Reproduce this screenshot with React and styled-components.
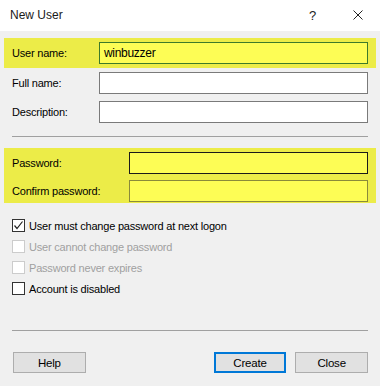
import React from "react";
import styled, { createGlobalStyle } from "styled-components";

const GlobalStyle = createGlobalStyle`
  html, body {
    margin: 0;
    padding: 0;
    background: #f0f0f0;
  }
  * {
    box-sizing: border-box;
  }
`;

const Window = styled.div`
  width: 380px;
  height: 386px;
  background: #f0f0f0;
  font-family: "Liberation Sans", Arial, sans-serif;
  font-size: 11px;
  letter-spacing: -0.2px;
  color: #000;
  display: flex;
  flex-direction: column;
  overflow: hidden;
`;

const TitleBar = styled.div`
  height: 31px;
  background: #fff;
  display: flex;
  align-items: center;
  padding: 0 0 1px 10px;
  letter-spacing: 0;
`;

const Title = styled.div`
  flex: 1;
  font-size: 12px;
  color: #1a1a1a;
`;

const TitleButton = styled.div`
  width: 45px;
  height: 30px;
  display: flex;
  align-items: center;
  justify-content: center;
  font-size: 13px;
  color: #222;
`;

const Body = styled.div`
  padding: 7px 12px 0 12px;
  display: flex;
  flex-direction: column;
`;

const Band = styled.div`
  margin: 0 -8px;
  padding: ${(p) => p.$pad || "4px 8px"};
  background: #ecec48;
  display: flex;
  flex-direction: column;
  gap: ${(p) => p.$gap || 0}px;
`;

const Row = styled.div`
  height: ${(p) => p.$h || 22}px;
  display: flex;
  align-items: center;
`;

const Label = styled.div`
  width: ${(p) => p.$w}px;
  flex: none;
`;

const Field = styled.div`
  flex: 1;
  height: 22px;
  border: 1px solid ${(p) => p.$border || "#7a7a7a"};
  background: ${(p) => (p.$hl ? "#fdfd55" : "#fff")};
  padding: 0 4px;
  display: flex;
  align-items: center;
  font-size: 12px;
  letter-spacing: -0.3px;
`;

const Separator = styled.div`
  height: 1px;
  background: #a0a0a0;
  margin: ${(p) => p.$m};
`;

const Checks = styled.div`
  margin-top: 12px;
  display: flex;
  flex-direction: column;
`;

const CheckRow = styled.div`
  height: 21px;
  display: flex;
  align-items: center;
  gap: 4px;
  font-size: 11px;
  color: ${(p) => (p.$disabled ? "#a0a0a0" : "#000")};
`;

const Box = styled.div`
  width: 13px;
  height: 13px;
  border: 1px solid ${(p) => (p.$disabled ? "#cccccc" : "#333")};
  background: #fff;
  display: flex;
  align-items: center;
  justify-content: center;
`;

const Buttons = styled.div`
  display: flex;
  align-items: center;
  padding: 0 0 0 1px;
`;

const Button = styled.div`
  width: ${(p) => p.$w || 73}px;
  height: 21px;
  border: ${(p) => (p.$primary ? "2px solid #0078d7" : "1px solid #adadad")};
  background: #e1e1e1;
  display: flex;
  align-items: center;
  justify-content: center;
  font-size: 11.5px;
  margin-left: ${(p) => p.$ml || 0}px;
`;

function Check({ checked, disabled, children }) {
  return (
    <CheckRow $disabled={disabled}>
      <Box $disabled={disabled}>
        {checked && (
          <svg width="11" height="11" viewBox="0 0 11 11">
            <polyline points="1.5,5.5 4,8.5 9.5,1.5" fill="none" stroke="#222" strokeWidth="1.2" />
          </svg>
        )}
      </Box>
      {children}
    </CheckRow>
  );
}

export default function App() {
  return (
    <Window>
      <GlobalStyle />
      <TitleBar>
        <Title>New User</Title>
        <TitleButton>?</TitleButton>
        <TitleButton>
          <svg width="10" height="10" viewBox="0 0 10 10">
            <path d="M0.5 0.5 L9.5 9.5 M9.5 0.5 L0.5 9.5" stroke="#222" strokeWidth="1" />
          </svg>
        </TitleButton>
      </TitleBar>
      <Body>
        <Band>
          <Row>
            <Label $w={87}>User name:</Label>
            <Field $hl $border="#3d7a2a">winbuzzer</Field>
          </Row>
        </Band>
        <Row $h={29}>
          <Label $w={87}>Full name:</Label>
          <Field />
        </Row>
        <Row $h={29}>
          <Label $w={87}>Description:</Label>
          <Field />
        </Row>
        <Separator $m="10px 0 11px" />
        <Band $pad="4px 8px 1px" $gap={6}>
          <Row>
            <Label $w={117}>Password:</Label>
            <Field $hl $border="#1a1a1a" />
          </Row>
          <Row>
            <Label $w={117}>Confirm password:</Label>
            <Field $hl $border="#8a8a3a" />
          </Row>
        </Band>
        <Checks>
          <Check checked>User must change password at next logon</Check>
          <Check disabled>User cannot change password</Check>
          <Check disabled>Password never expires</Check>
          <Check>Account is disabled</Check>
        </Checks>
        <Separator $m="31px 0 21px" />
        <Buttons>
          <Button>Help</Button>
          <Button $primary $ml={128}>Create</Button>
          <Button $ml={9}>Close</Button>
        </Buttons>
      </Body>
    </Window>
  );
}
